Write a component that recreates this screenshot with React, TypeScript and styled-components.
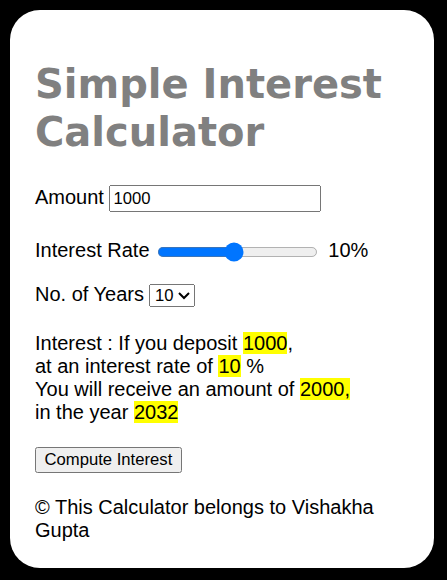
import React, { useState } from "react";
import styled, { createGlobalStyle } from "styled-components";

const GlobalStyle = createGlobalStyle`
  html, body {
    margin: 0;
    background: #000;
  }
  body {
    font-family: "Liberation Sans", Arial, sans-serif;
    font-size: 16px;
    color: #000;
  }
`;

// the reference was taken at 125% scale, so the native controls get zoomed too
const Page = styled.div`
  zoom: 1.25;
  padding: 8px;
`;

const Card = styled.div`
  box-sizing: border-box;
  width: 339px;
  min-height: 446px;
  padding: 20px;
  background: #fff;
  border-radius: 24px;
  overflow: hidden;
`;

const Title = styled.h1`
  margin: 20px 0 23px;
  font-family: "DejaVu Sans", Verdana, sans-serif;
  font-size: 32px;
  line-height: 38.6px;
  font-weight: bold;
  color: gray;
`;

const Row = styled.div<{ $top?: number }>`
  margin-top: ${({ $top }) => $top ?? 0}px;
  line-height: normal;
`;

const Label = styled.label`
  margin-right: 4px;
`;

const AmountInput = styled.input`
  box-sizing: border-box;
  width: 170px;
`;

const RateInput = styled.input`
  vertical-align: middle;
  margin: 2px 8px 2px 2px;
`;

const Result = styled.div`
  margin-top: 19.5px;
`;

const Highlight = styled.mark`
  background: #ffff00;
  color: #000;
`;

const ComputeButton = styled.button`
  margin-top: 18.5px;
`;

const Footer = styled.p`
  margin: 18px 0 0;
`;

const BASE_YEAR = 2022;

export default function App() {
  const [amount, setAmount] = useState("1000");
  const [rate, setRate] = useState(10);
  const [years, setYears] = useState(10);
  const [result, setResult] = useState({ amount: "1000", rate: 10, total: 2000, year: 2032 });

  const compute = () => {
    const p = Number(amount) || 0;
    const interest = (p * rate * years) / 100;
    setResult({ amount, rate, total: p + interest, year: BASE_YEAR + years });
  };

  return (
    <>
      <GlobalStyle />
      <Page>
        <Card>
          <Title>Simple Interest Calculator</Title>

          <Row>
            <Label htmlFor="amount">Amount</Label>
            <AmountInput id="amount" type="text" value={amount} onChange={(e) => setAmount(e.target.value)} />
          </Row>

          <Row $top={22}>
            <Label htmlFor="rate">Interest Rate</Label>
            <RateInput
              id="rate"
              type="range"
              min={1}
              max={20}
              value={rate}
              onChange={(e) => setRate(Number(e.target.value))}
            />
            {rate}%
          </Row>

          <Row $top={15}>
            <Label htmlFor="years">No. of Years</Label>
            <select id="years" value={years} onChange={(e) => setYears(Number(e.target.value))}>
              {Array.from({ length: 20 }, (_, i) => i + 1).map((n) => (
                <option key={n} value={n}>
                  {n}
                </option>
              ))}
            </select>
          </Row>

          <Result>
            Interest : If you deposit <Highlight>{result.amount}</Highlight>,
            <br />
            at an interest rate of <Highlight>{result.rate}</Highlight> %
            <br />
            You will receive an amount of <Highlight>{result.total},</Highlight>
            <br />
            in the year <Highlight>{result.year}</Highlight>
          </Result>

          <div>
            <ComputeButton onClick={compute}>Compute Interest</ComputeButton>
          </div>

          <Footer>© This Calculator belongs to Vishakha Gupta</Footer>
        </Card>
      </Page>
    </>
  );
}
